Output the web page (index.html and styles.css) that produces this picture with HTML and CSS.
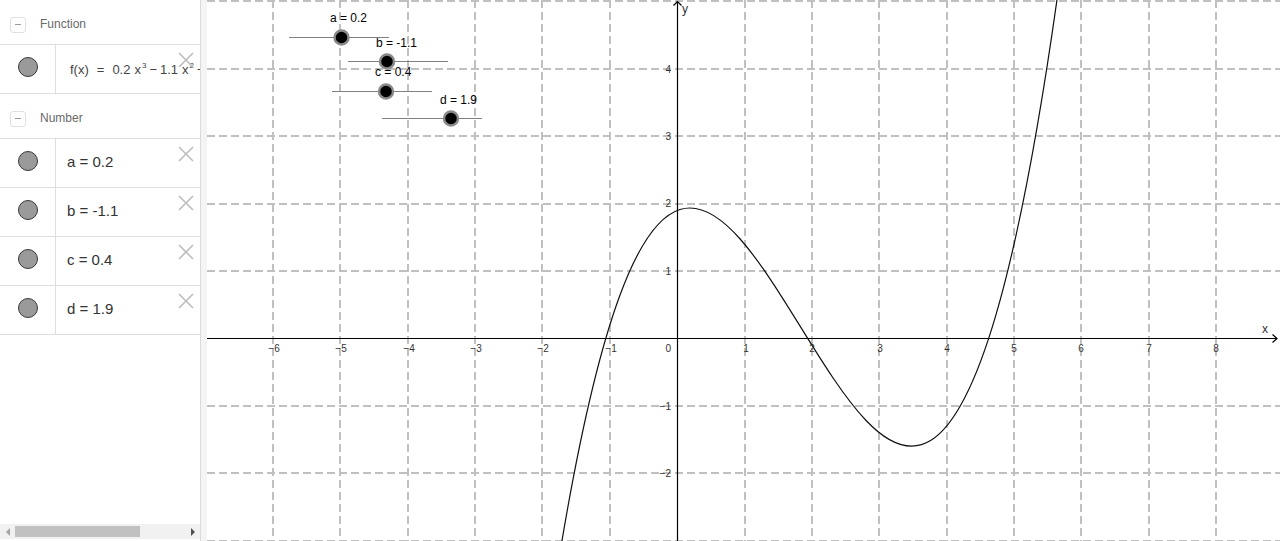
FILE: index.html
```html
<!DOCTYPE html>
<html lang="en">
<head>
    <meta charset="UTF-8">
    <meta name="viewport" content="width=device-width, initial-scale=1.0">
    <title>Cubic with sliders</title>
    <link rel="stylesheet" href="styles.css">
</head>
<body>
<div class="app">
    <div class="algebra">
        <div class="items">
            <div class="group"><span class="toggle"></span><span class="group-name">Function</span></div>
            <div class="item">
                <div class="marble-cell"><span class="marble"></span></div>
                <div class="formula func">f(x)<span class="rel">=</span>0.2<span class="sp"></span>x<sup>3</sup><span class="bin">−</span>1.1<span class="sp"></span>x<sup>2</sup><span class="bin">+</span>0.4<span class="sp"></span>x<span class="bin">+</span>1.9</div>
                <svg class="close" viewBox="0 0 16 16"><path d="M1 1L15 15M15 1L1 15"/></svg>
            </div>
            <div class="group"><span class="toggle"></span><span class="group-name">Number</span></div>
            <div class="item">
                <div class="marble-cell"><span class="marble"></span></div>
                <div class="formula">a = 0.2</div>
                <svg class="close" viewBox="0 0 16 16"><path d="M1 1L15 15M15 1L1 15"/></svg>
            </div>
            <div class="item">
                <div class="marble-cell"><span class="marble"></span></div>
                <div class="formula">b = -1.1</div>
                <svg class="close" viewBox="0 0 16 16"><path d="M1 1L15 15M15 1L1 15"/></svg>
            </div>
            <div class="item">
                <div class="marble-cell"><span class="marble"></span></div>
                <div class="formula">c = 0.4</div>
                <svg class="close" viewBox="0 0 16 16"><path d="M1 1L15 15M15 1L1 15"/></svg>
            </div>
            <div class="item">
                <div class="marble-cell"><span class="marble"></span></div>
                <div class="formula">d = 1.9</div>
                <svg class="close" viewBox="0 0 16 16"><path d="M1 1L15 15M15 1L1 15"/></svg>
            </div>
        </div>
        <div class="hscroll">
            <span class="arrow-cell"><span class="arrow left"></span></span>
            <span class="thumb"></span>
            <span class="rest"></span>
            <span class="arrow-cell end"><span class="arrow right"></span></span>
        </div>
    </div>
    <div class="splitter"></div>
    <div class="graph">
        <svg class="plot" width="1073" height="541" viewBox="207 0 1073 541">
            <!-- grid, one unit = 67.37px, origin (677.2, 338.5) -->
            <path class="grid" d="M273 0V541M340 0V541M408 0V541M475 0V541M542 0V541M610 0V541M745 0V541M812 0V541M879 0V541M947 0V541M1014 0V541M1081 0V541M1149 0V541M1216 0V541"/>
            <path class="grid" d="M207 1H1280M207 69H1280M207 136H1280M207 204H1280M207 271H1280M207 406H1280M207 473H1280M207 541H1280"/>

            <path class="axis" d="M207 338.5H1277M677.5 541V1.5"/>
            <path class="axis" d="M1272.5 334.5L1277 338.5L1272.5 342.5M673.5 5.5L677.5 1.5L681.5 5.5"/>

            <text class="tick" x="274" y="352">−6</text>
            <text class="tick" x="341" y="352">−5</text>
            <text class="tick" x="409" y="352">−4</text>
            <text class="tick" x="476" y="352">−3</text>
            <text class="tick" x="543" y="352">−2</text>
            <text class="tick" x="611" y="352">−1</text>
            <text class="tick end" x="671" y="352">0</text>
            <text class="tick" x="746" y="352">1</text>
            <text class="tick" x="812" y="352">2</text>
            <text class="tick" x="880" y="352">3</text>
            <text class="tick" x="947" y="352">4</text>
            <text class="tick" x="1014" y="352">5</text>
            <text class="tick" x="1081" y="352">6</text>
            <text class="tick" x="1149" y="352">7</text>
            <text class="tick" x="1216" y="352">8</text>

            <text class="tick end" x="671" y="72.5">4</text>
            <text class="tick end" x="671" y="139.5">3</text>
            <text class="tick end" x="671" y="207">2</text>
            <text class="tick end" x="671" y="274.5">1</text>
            <text class="tick end" x="671" y="409.5">−1</text>
            <text class="tick end" x="671" y="476.5">−2</text>

            <text class="axis-name" x="1262" y="333">x</text>
            <text class="axis-name" x="682" y="13">y</text>

            <!-- f(x) = 0.2x³ − 1.1x² + 0.4x + 1.9 on [−1.75, 5.7], exact cubic bezier -->
            <path class="curve" d="M559.3 556.82C726.6 -461.63 893.91 1199.68 1061.21 -30.66"/>

            <g class="slider">
                <line x1="289" y1="37.5" x2="389" y2="37.5"/>
                <circle cx="341.5" cy="37.5" r="7"/>
                <text x="330" y="22">a = 0.2</text>
            </g>
            <g class="slider">
                <line x1="348" y1="61.5" x2="448" y2="61.5"/>
                <circle cx="387" cy="61.5" r="7"/>
                <text x="376" y="46.5">b = -1.1</text>
            </g>
            <g class="slider">
                <line x1="332" y1="91.5" x2="432" y2="91.5"/>
                <circle cx="386" cy="91.5" r="7"/>
                <text x="375" y="76">c = 0.4</text>
            </g>
            <g class="slider">
                <line x1="382" y1="118.5" x2="482" y2="118.5"/>
                <circle cx="451" cy="118.5" r="7"/>
                <text x="440" y="103.5">d = 1.9</text>
            </g>
        </svg>
    </div>
</div>
</body>
</html>
```

FILE: styles.css
```css
body {
    margin: 0;
    overflow: hidden;
    font-family: "Liberation Sans", Arial, sans-serif;
    background: #fff;
}

.app {
    display: flex;
    height: 541px;
}

/* algebra view */
.algebra {
    width: 200px;
    flex: none;
    border-right: 1px solid #dadada;
    display: flex;
    flex-direction: column;
}
.items {
    flex: 1;
}
.group {
    height: 40px;
    padding-top: 4px;
    display: flex;
    align-items: center;
    border-bottom: 1px solid #dedede;
}
.toggle {
    position: relative;
    width: 14px;
    height: 14px;
    margin: 2px 14px 0 10px;
    border: 1px solid #e0e0e0;
    border-radius: 3px;
}
.toggle::before {
    content: "";
    position: absolute;
    left: 4px;
    top: 6px;
    width: 6px;
    height: 1px;
    background: #9a9a9a;
}
.group-name {
    font-size: 12px;
    color: #6a6a6a;
}

.item {
    position: relative;
    height: 48px;
    display: flex;
    border-bottom: 1px solid #dedede;
}
.marble-cell {
    width: 56px;
    flex: none;
    border-right: 1px solid #dedede;
    display: flex;
    justify-content: center;
    padding-top: 12px;
    box-sizing: border-box;
}
.marble {
    width: 18px;
    height: 18px;
    border: 1px solid #3a3a3a;
    border-radius: 50%;
    background: #9a9a9a;
}
.formula {
    flex: 1;
    min-width: 0;
    padding-left: 11px;
    line-height: 46px;
    white-space: nowrap;
    overflow: hidden;
    font-size: 15px;
    color: #333;
}
.formula.func {
    padding-left: 14px;
    line-height: 50px;
    font-size: 13px;
    color: #444;
}
.formula sup {
    font-size: 8px;
    line-height: 0;
    vertical-align: 6px;
    margin-left: 1px;
}
.rel {
    display: inline-block;
    margin: 0 8px;
}
.bin {
    display: inline-block;
    margin: 0 3px 0 3px;
}
.sp {
    display: inline-block;
    width: 4px;
}
.close {
    position: absolute;
    top: 7px;
    right: 6px;
    width: 16px;
    height: 16px;
    fill: none;
    stroke: #bdbdbd;
    stroke-width: 1.6;
}

.hscroll {
    height: 15px;
    margin-bottom: 2px;
    display: flex;
    align-items: center;
    background: #f1f1f1;
}
.arrow-cell {
    width: 15px;
    display: flex;
    justify-content: center;
}
.arrow-cell.end {
    width: 14px;
}
.arrow {
    width: 0;
    height: 0;
    border-top: 4px solid transparent;
    border-bottom: 4px solid transparent;
}
.arrow.left {
    border-right: 4px solid #a3a3a3;
}
.arrow.right {
    border-left: 4px solid #505050;
}
.thumb {
    width: 125px;
    height: 11px;
    background: #c1c1c1;
}
.rest {
    flex: 1;
}

.splitter {
    width: 6px;
    flex: none;
    background: #f4f4f4;
}

/* graphics view */
.graph {
    flex: 1;
    overflow: hidden;
}
.plot {
    display: block;
}
.grid {
    fill: none;
    stroke: #c0c0c0;
    stroke-width: 2;
    stroke-dasharray: 8 4;
}
.axis {
    fill: none;
    stroke: #000;
    stroke-width: 1.2;
}
.tick {
    font-size: 10px;
    fill: #333;
    text-anchor: middle;
}
.tick.end {
    text-anchor: end;
}
.axis-name {
    font-size: 12px;
    fill: #333;
}
.curve {
    fill: none;
    stroke: #111;
    stroke-width: 1.2;
}
.slider line {
    stroke: #808080;
    stroke-width: 1;
}
.slider circle {
    fill: #000;
    stroke: #8a8a8a;
    stroke-width: 2.5;
}
.slider text {
    font-size: 12px;
    fill: #000;
}
```
